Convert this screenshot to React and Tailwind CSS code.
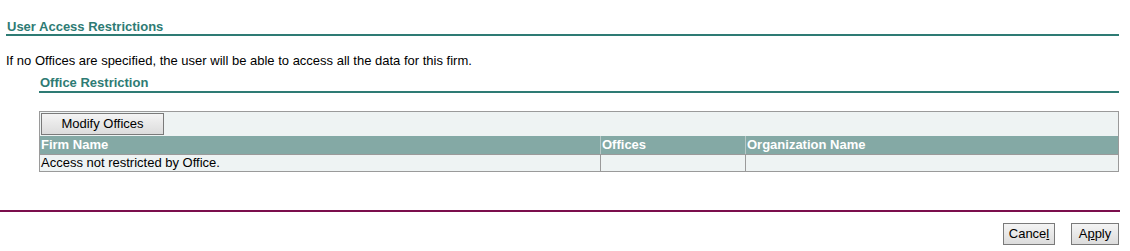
export default function App() {
  return (
    <div className="w-[1130px] h-[251px] bg-white font-['Liberation_Sans',Arial,sans-serif] text-[13px] text-black">
      <div className="pl-[6px] pr-[11px]">
        {/* Section header */}
        <div className="pt-[19px]">
          <div className="pl-[1px] border-b-2 border-[#2e7b74] text-[#2e7b74] font-bold leading-[15px]">
            User Access Restrictions
          </div>
        </div>

        <p className="mt-[17px] leading-[15px]">
          If no Offices are specified, the user will be able to access all the data for this firm.
        </p>

        <div className="pl-[33px]">
          <div className="mt-[7px] pl-[1px] pb-[1px] border-b-2 border-[#2e7b74] text-[#2e7b74] font-bold leading-[15px]">
            Office Restriction
          </div>

          {/* Offices table */}
          <div className="mt-[18px] border border-[#9a9a9a] bg-[#eef3f3]">
            <div className="h-[24px] pl-[1px] pt-[1px]">
              <button className="h-[22px] w-[123px] border border-[#7a7a7a] bg-gradient-to-b from-[#f4f4f4] to-[#dcdcdc] leading-[20px] text-black">
                Modify Offices
              </button>
            </div>
            <div className="grid grid-cols-[560px_145px_1fr] bg-[#84a9a5] text-white font-bold leading-[18px]">
              <div className="pl-[1px]">Firm Name</div>
              <div className="pl-[1px] border-l border-[#b7c9c7]">Offices</div>
              <div className="pl-[1px] border-l border-[#b7c9c7]">Organization Name</div>
            </div>
            <div className="grid grid-cols-[560px_145px_1fr] leading-[16px] border-t border-[#9a9a9a]">
              <div className="pl-[1px]">Access not restricted by Office.</div>
              <div className="border-l border-[#9a9a9a]"></div>
              <div className="border-l border-[#9a9a9a]"></div>
            </div>
          </div>
        </div>
      </div>

      {/* Footer */}
      <div className="mt-[38px] w-[1120px] border-t-2 border-[#7b0e4c]"></div>
      <div className="flex justify-end gap-[16px] pr-[11px] mt-[11px]">
        <button className="h-[22px] w-[52px] border border-[#7a7a7a] bg-gradient-to-b from-[#f4f4f4] to-[#dcdcdc] leading-[20px] text-black">
          Cance<span className="underline">l</span>
        </button>
        <button className="h-[22px] w-[48px] border border-[#7a7a7a] bg-gradient-to-b from-[#f4f4f4] to-[#dcdcdc] leading-[20px] text-black">
          A<span className="underline">p</span>ply
        </button>
      </div>
    </div>
  );
}
